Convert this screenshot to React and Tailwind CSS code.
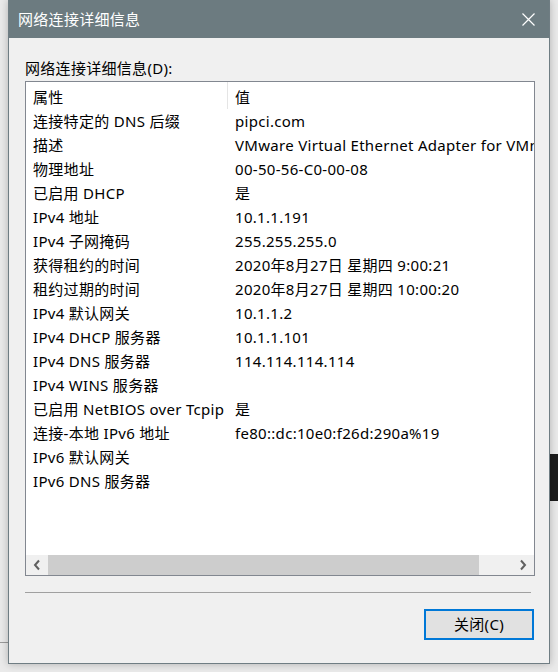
import React from 'react';

const rows = [
  ['连接特定的 DNS 后缀', 'pipci.com'],
  ['描述', 'VMware Virtual Ethernet Adapter for VMnet8'],
  ['物理地址', '00-50-56-C0-00-08'],
  ['已启用 DHCP', '是'],
  ['IPv4 地址', '10.1.1.191'],
  ['IPv4 子网掩码', '255.255.255.0'],
  ['获得租约的时间', '2020年8月27日 星期四 9:00:21'],
  ['租约过期的时间', '2020年8月27日 星期四 10:00:20'],
  ['IPv4 默认网关', '10.1.1.2'],
  ['IPv4 DHCP 服务器', '10.1.1.101'],
  ['IPv4 DNS 服务器', '114.114.114.114'],
  ['IPv4 WINS 服务器', ''],
  ['已启用 NetBIOS over Tcpip', '是'],
  ['连接-本地 IPv6 地址', 'fe80::dc:10e0:f26d:290a%19'],
  ['IPv6 默认网关', ''],
  ['IPv6 DNS 服务器', ''],
];

export default function App() {
  return (
    <div
      className="relative w-[558px] h-[672px] overflow-hidden bg-[#eaeaea] text-[15px] tracking-[0.3px] text-black"
      style={{ fontFamily: '"Noto Sans", "Noto Sans CJK SC", sans-serif' }}
    >
      {/* windows behind the dialog */}
      <div className="absolute left-0 top-[642px] w-[8px] h-px bg-[#9a9a9a]" />
      <div className="absolute left-[550px] top-[454px] w-[8px] h-[47px] bg-[#1b1b1b]" />

      <div className="relative ml-[8px] w-[542px] h-[664px] flex flex-col bg-[#f0f0f0] border border-t-0 border-[#6f7d83] shadow-[0_0_8px_rgba(0,0,0,0.25)]">
        {/* title bar */}
        <div className="h-[38px] shrink-0 flex items-center justify-between bg-[#6c7b80] text-white pl-[9px] pr-[14px]">
          <span className="leading-none">网络连接详细信息</span>
          <svg width="13" height="13" viewBox="0 0 13 13">
            <path d="M0.5 0.5 L12.5 12.5 M12.5 0.5 L0.5 12.5" stroke="white" strokeWidth="1.2" fill="none" />
          </svg>
        </div>

        <div className="flex flex-col pl-[16px] pr-[15px]">
          <div className="h-[43px] flex items-end pb-[5px] leading-none">网络连接详细信息(D):</div>

          {/* list view */}
          <div className="w-[510px] h-[495px] border border-[#828790] bg-white flex flex-col overflow-hidden">
            <div className="flex-1 pt-[3px] overflow-hidden">
              <div className="h-[24px] flex items-center whitespace-nowrap">
                <div className="w-[202px] pl-[7px] shrink-0 relative h-full flex items-center">
                  属性
                  <div className="absolute right-0 top-[-3px] h-[27px] w-px bg-[#e5e5e5]" />
                </div>
                <div className="pl-[7px]">值</div>
              </div>
              {rows.map(([k, v]) => (
                <div key={k} className="h-[24px] flex items-center whitespace-nowrap">
                  <div className="w-[202px] pl-[7px] shrink-0">{k}</div>
                  <div className="pl-[7px]">{v}</div>
                </div>
              ))}
            </div>

            {/* horizontal scrollbar */}
            <div className="h-[20px] shrink-0 flex bg-[#f0f0f0]">
              <div className="w-[22px] flex items-center justify-center">
                <svg width="8" height="12" viewBox="0 0 8 12">
                  <path d="M6 1.5 L2 6 L6 10.5" stroke="#606060" strokeWidth="2" fill="none" />
                </svg>
              </div>
              <div className="flex-1 flex">
                <div className="w-[431px] h-full bg-[#cdcdcd]" />
              </div>
              <div className="w-[22px] flex items-center justify-center">
                <svg width="8" height="12" viewBox="0 0 8 12">
                  <path d="M2 1.5 L6 6 L2 10.5" stroke="#606060" strokeWidth="2" fill="none" />
                </svg>
              </div>
            </div>
          </div>

          <div className="mt-[16px] w-[506px] h-px bg-[#a0a0a0]" />

          <div className="mt-[16px] flex justify-end">
            <button className="w-[110px] h-[31px] border-2 border-[#0078d7] bg-[#e1e1e1] flex items-center justify-center leading-none">
              关闭(C)
            </button>
          </div>
        </div>
      </div>
    </div>
  );
}
